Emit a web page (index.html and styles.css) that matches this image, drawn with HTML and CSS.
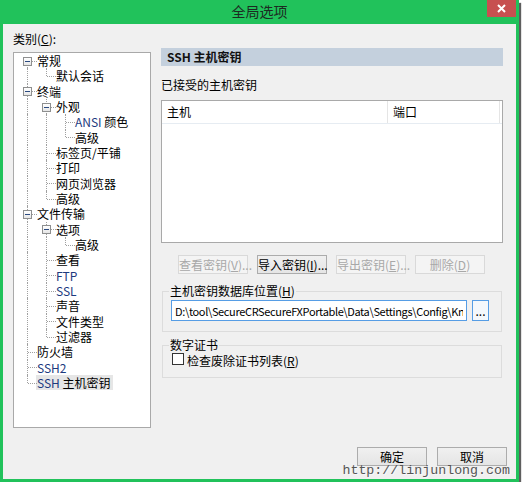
FILE: index.html
```html
<!DOCTYPE html>
<html lang="zh-CN">
<head>
<meta charset="utf-8">
<title>全局选项</title>
<link rel="stylesheet" href="styles.css">
</head>
<body>
<div class="window">
  <div class="titlebar">
    全局选项
    <span class="close"><svg width="9" height="9" viewBox="0 0 9 9"><path d="M1 1L8 8M8 1L1 8" stroke="#fff" stroke-width="2"/></svg></span>
  </div>
  <div class="client">
    <div class="main">
      <div class="left">
        <div class="caption">类别(<u>C</u>):</div>
        <div class="tree">
          <div class="node"><span class="c first"><i class="box"></i></span><span class="t">常规</span></div>
          <div class="node"><span class="g v"></span><span class="c last"></span><span class="t">默认会话</span></div>
          <div class="node"><span class="c"><i class="box"></i></span><span class="t">终端</span></div>
          <div class="node"><span class="g v"></span><span class="c"><i class="box"></i></span><span class="t">外观</span></div>
          <div class="node"><span class="g v"></span><span class="g v"></span><span class="c"></span><span class="t"><span class="en">ANSI</span> 颜色</span></div>
          <div class="node"><span class="g v"></span><span class="g v"></span><span class="c last"></span><span class="t">高级</span></div>
          <div class="node"><span class="g v"></span><span class="c"></span><span class="t">标签页/平铺</span></div>
          <div class="node"><span class="g v"></span><span class="c"></span><span class="t">打印</span></div>
          <div class="node"><span class="g v"></span><span class="c"></span><span class="t">网页浏览器</span></div>
          <div class="node"><span class="g v"></span><span class="c last"></span><span class="t">高级</span></div>
          <div class="node"><span class="c"><i class="box"></i></span><span class="t">文件传输</span></div>
          <div class="node"><span class="g v"></span><span class="c"><i class="box"></i></span><span class="t">选项</span></div>
          <div class="node"><span class="g v"></span><span class="g v"></span><span class="c last"></span><span class="t">高级</span></div>
          <div class="node"><span class="g v"></span><span class="c"></span><span class="t">查看</span></div>
          <div class="node"><span class="g v"></span><span class="c"></span><span class="t"><span class="en">FTP</span></span></div>
          <div class="node"><span class="g v"></span><span class="c"></span><span class="t"><span class="en">SSL</span></span></div>
          <div class="node"><span class="g v"></span><span class="c"></span><span class="t">声音</span></div>
          <div class="node"><span class="g v"></span><span class="c"></span><span class="t">文件类型</span></div>
          <div class="node"><span class="g v"></span><span class="c last"></span><span class="t">过滤器</span></div>
          <div class="node"><span class="c"></span><span class="t">防火墙</span></div>
          <div class="node"><span class="c"></span><span class="t"><span class="en">SSH2</span></span></div>
          <div class="node"><span class="c last"></span><span class="t selected"><span class="en">SSH</span> 主机密钥</span></div>
        </div>
      </div>
      <div class="right">
        <div class="pagehead">SSH 主机密钥</div>
        <div class="label">已接受的主机密钥</div>
        <div class="list">
          <div class="listhead">
            <span class="col col-host">主机</span>
            <span class="col col-port">端口</span>
          </div>
        </div>
        <div class="actions">
          <button class="btn" disabled>查看密钥(<u>V</u>)...</button>
          <button class="btn">导入密钥(<u>I</u>)...</button>
          <button class="btn" disabled>导出密钥(<u>E</u>)...</button>
          <button class="btn" disabled>删除(<u>D</u>)</button>
        </div>
        <fieldset class="group">
          <legend>主机密钥数据库位置(<u>H</u>)</legend>
          <div class="pathrow">
            <input class="path" type="text" readonly value="D:\tool\SecureCRSecureFXPortable\Data\Settings\Config\KnownHosts">
            <button class="browse">...</button>
          </div>
        </fieldset>
        <fieldset class="group group-cert">
          <legend>数字证书</legend>
          <label class="check"><span class="checkbox"></span>检查废除证书列表(<u>R</u>)</label>
        </fieldset>
      </div>
    </div>
    <div class="footer">
      <button class="btn">确定</button>
      <button class="btn">取消</button>
    </div>
  </div>
  <div class="watermark">http://linjunlong.com</div>
</div>
</body>
</html>
```
FILE: styles.css
```css
html, body {
  margin: 0;
  background: #fff;
}

body {
  font-family: "Noto Sans CJK SC", "Liberation Sans", sans-serif;
  font-size: 12px;
  color: #000;
}

u {
  text-decoration: underline;
  text-underline-offset: 1px;
}

/* window frame */
.window {
  position: relative;
  width: 519px;
  height: 482px;
  box-sizing: border-box;
  padding: 0 3px 3px;
  background: #21c25b;
  display: flex;
  flex-direction: column;
  box-shadow: 2px 3px 1px rgba(40, 40, 40, 0.75);
}

.titlebar {
  position: relative;
  height: 24px;
  line-height: 22px;
  text-align: center;
  font-size: 14px;
  color: #1c2a22;
  flex: none;
}

.close {
  position: absolute;
  top: 0;
  right: 0;
  width: 29px;
  height: 17px;
  background: #c75050;
  display: flex;
  align-items: center;
  justify-content: center;
}

.client {
  flex: 1;
  background: #f0f0f0;
  display: flex;
  flex-direction: column;
}

.main {
  flex: 1;
  display: flex;
}

/* category tree */
.left {
  padding: 6px 0 0 10px;
  display: flex;
  flex-direction: column;
}

.caption {
  line-height: 18px;
  height: 18px;
}

.tree {
  margin-top: 4px;
  width: 138px;
  height: 376px;
  box-sizing: border-box;
  border: 1px solid #a9a9a9;
  background: #fff;
  padding: 0 0 0 4px;
}

.node {
  display: flex;
  height: 15.33px;
}

.g, .c {
  position: relative;
  flex: none;
  width: 19px;
}

.g.v::before,
.c::before {
  content: "";
  position: absolute;
  left: 9px;
  top: 0;
  bottom: 0;
  border-left: 1px dotted #a0a0a0;
}

.c.first::before { top: 50%; }
.c.last::before { bottom: 50%; }

.c::after {
  content: "";
  position: absolute;
  left: 10px;
  right: 0;
  top: 50%;
  border-top: 1px dotted #a0a0a0;
}

.box {
  position: absolute;
  z-index: 1;
  left: 5px;
  top: calc(50% - 4px);
  width: 9px;
  height: 9px;
  box-sizing: border-box;
  border: 1px solid #8e8f8f;
  background: linear-gradient(#fff, #e6e6e6);
}

.box::after {
  content: "";
  position: absolute;
  left: 1px;
  right: 1px;
  top: 3px;
  border-top: 1px solid #2b4a80;
}

.t {
  line-height: 15px;
  height: 15px;
  margin-top: 0.16px;
  white-space: nowrap;
  padding: 0 2px 0 1px;
  margin-left: -1px;
}

.t.selected {
  background: #e6e6e6;
}

.en {
  color: #1d3a7e;
}

/* settings page */
.right {
  margin-left: 10px;
  width: 342px;
  padding-top: 24px;
  display: flex;
  flex-direction: column;
}

.pagehead {
  height: 18px;
  line-height: 18px;
  padding-left: 6px;
  background: #c4d0dd;
  font-weight: bold;
  color: #111;
}

.label {
  margin-top: 10px;
  line-height: 18px;
}

.list {
  margin-top: 6px;
  height: 143px;
  box-sizing: border-box;
  border: 1px solid #a9a9a9;
  background: #fff;
}

.listhead {
  display: flex;
  height: 22px;
  border-bottom: 1px solid #e6ecf2;
}

.col {
  box-sizing: border-box;
  line-height: 22px;
  padding-left: 5px;
  border-right: 1px solid #e5e5e5;
}

.col-host { width: 226px; }
.col-port { width: 112px; }

.actions {
  margin-top: 12px;
  padding-left: 17px;
  display: flex;
  gap: 9px;
}

.btn {
  width: 70px;
  height: 19px;
  padding: 0;
  box-sizing: border-box;
  font: inherit;
  line-height: 17px;
  color: #000;
  border: 1px solid #acacac;
  background: linear-gradient(#f0f0f0, #e5e5e5);
  white-space: nowrap;
}

.btn:disabled {
  color: #a8a8a8;
  border-color: #d9d9d9;
  background: #f4f4f4;
}

.group {
  margin: 9px 1px 0;
  padding: 1px 0 10px 8px;
  border: 1px solid #dcdcdc;
  min-width: 0;
}

.group legend {
  padding: 0 1px;
  margin-left: -2px;
  line-height: 16px;
}

.group-cert {
  margin-top: 5px;
  padding-bottom: 8px;
  padding-top: 0;
}

.pathrow {
  display: flex;
  gap: 5px;
}

.path {
  width: 296px;
  height: 21px;
  box-sizing: border-box;
  margin: 0;
  padding: 0 3px;
  border: 1px solid #569de5;
  background: #fff;
  font-family: inherit;
  font-size: 11px;
  letter-spacing: -0.35px;
  color: #000;
  outline: none;
}

.browse {
  width: 17px;
  height: 21px;
  padding: 0;
  box-sizing: border-box;
  border: 1px solid #569de5;
  background: #f4f8fc;
  font: inherit;
  line-height: 14px;
}

.check {
  display: flex;
  align-items: flex-start;
  line-height: 16px;
  margin-left: 1px;
}

.checkbox {
  width: 12px;
  height: 12px;
  box-sizing: border-box;
  border: 1px solid #333;
  background: #fff;
  margin-right: 3px;
}

.footer {
  flex: none;
  display: flex;
  justify-content: flex-end;
  gap: 10px;
  padding: 0 9px 13px 0;
}

.watermark {
  position: absolute;
  right: 9px;
  bottom: 5px;
  font-family: "Liberation Mono", monospace;
  font-size: 13.3px;
  line-height: 13px;
  color: #555;
  text-shadow: 1px 1px 0 rgba(255, 255, 255, 0.6);
}
```
